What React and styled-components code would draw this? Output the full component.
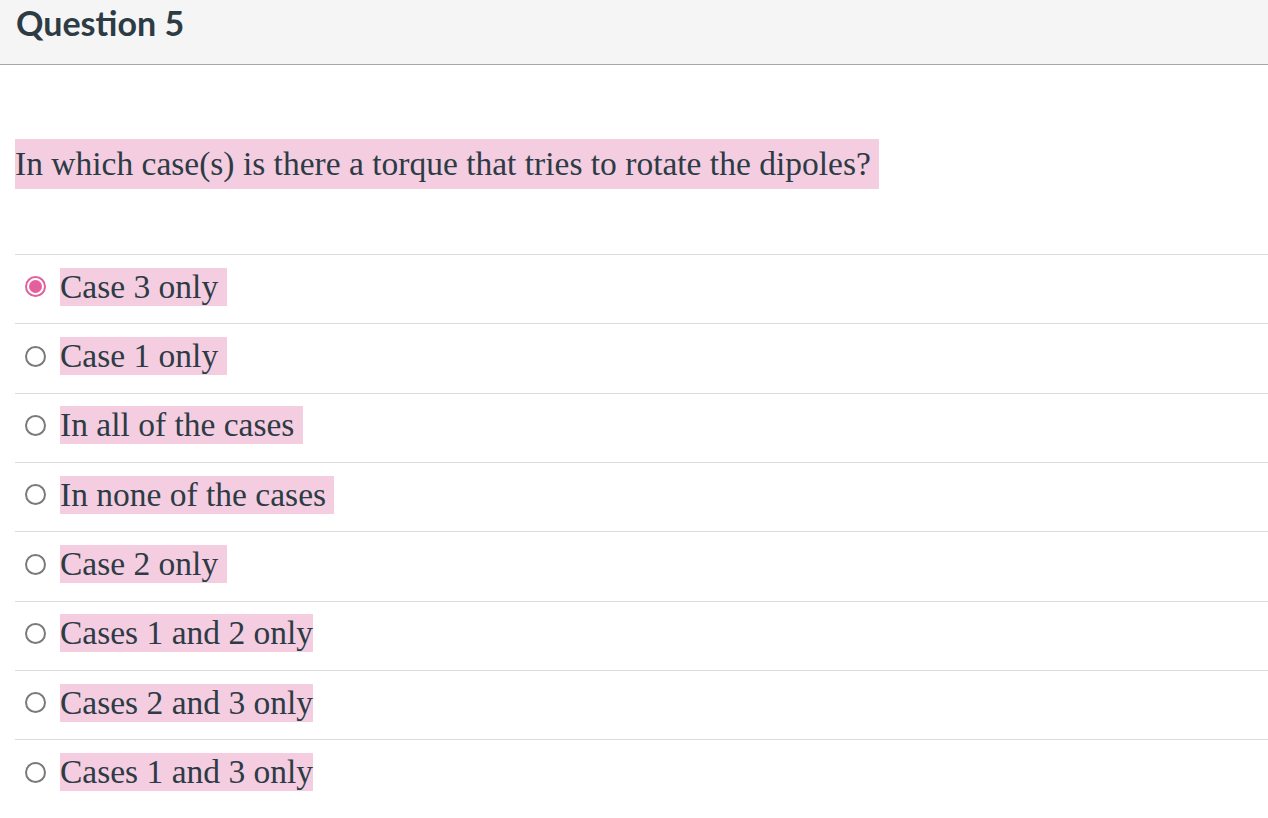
import React from 'react';
import styled, { createGlobalStyle } from 'styled-components';

const GlobalStyle = createGlobalStyle`
  body {
    margin: 0;
    background: #fff;
    color: #2d3b45;
  }
`;

const answers = [
  { text: 'Case 3 only ', selected: true },
  { text: 'Case 1 only ' },
  { text: 'In all of the cases ' },
  { text: 'In none of the cases ' },
  { text: 'Case 2 only ' },
  { text: 'Cases 1 and 2 only' },
  { text: 'Cases 2 and 3 only' },
  { text: 'Cases 1 and 3 only' },
];

function App() {
  return (
    <Wrapper>
      <GlobalStyle />
      <Header>
        <h2>Question 5</h2>
      </Header>
      <Body>
        <QuestionText>
          <Mark $pad>In which case(s) is there a torque that tries to rotate the dipoles? </Mark>
        </QuestionText>
        <AnswerList>
          {answers.map((item, index) => (
            <Answer key={index}>
              <Radio $selected={item.selected} />
              <Mark>{item.text}</Mark>
            </Answer>
          ))}
        </AnswerList>
      </Body>
    </Wrapper>
  );
}

export default App;

const Wrapper = styled.main`
  width: 100%;
  min-height: 818px;
  overflow: hidden;
`;

const Header = styled.header`
  height: 65px;
  box-sizing: border-box;
  background: #f5f5f5;
  border-bottom: 1px solid #a8a8a8;
  padding: 2px 16px 0;
  h2 {
    margin: 0;
    font-family: Lato, 'Liberation Sans', sans-serif;
    font-weight: 700;
    font-size: 34px;
    color: #2d3b45;
  }
`;

const Body = styled.section`
  padding: 0 0 0 15px;
`;

const QuestionText = styled.div`
  padding-top: 74px;
  margin-bottom: 65px;
  line-height: 1;
`;

const Mark = styled.span`
  display: inline-block;
  font-family: 'Liberation Serif', 'Times New Roman', serif;
  font-size: 33.5px;
  line-height: ${(p) => (p.$pad ? '50px' : '38px')};
  white-space: pre;
  background: #f4cde1;
  color: #2d3b45;
`;

const AnswerList = styled.div`
  display: flex;
  flex-direction: column;
`;

const Answer = styled.div`
  display: flex;
  align-items: center;
  gap: 14px;
  height: 69.35px;
  box-sizing: border-box;
  border-top: 1px solid #dcdcdc;
  padding: 0 0 5px 10px;
`;

const Radio = styled.span`
  position: relative;
  flex: none;
  width: 21px;
  height: 21px;
  box-sizing: border-box;
  border-radius: 50%;
  border: 2px solid ${(p) => (p.$selected ? '#e3609d' : '#7a7a7a')};
  background: #fff;
  &::after {
    content: '';
    display: ${(p) => (p.$selected ? 'block' : 'none')};
    position: absolute;
    inset: 2px;
    border-radius: 50%;
    background: #e3609d;
  }
`;
